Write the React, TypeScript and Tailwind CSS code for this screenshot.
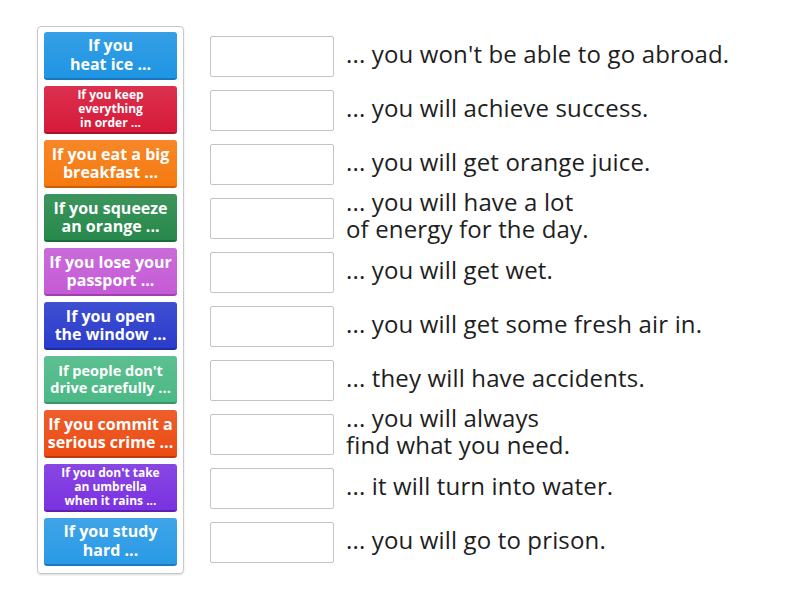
const items = [
  { text: ['If you', 'heat ice ...'], bg: 'bg-[#1f95e3]', border: 'border-[#1577bd]', size: 'text-[16px] leading-[19px]', answer: ["... you won't be able to go abroad."] },
  { text: ['If you keep', 'everything', 'in order ...'], bg: 'bg-[#d71a3a]', border: 'border-[#a9122c]', size: 'text-[12px] leading-[14px]', answer: ['... you will achieve success.'] },
  { text: ['If you eat a big', 'breakfast ...'], bg: 'bg-[#f67a10]', border: 'border-[#c85f06]', size: 'text-[16px] leading-[18px]', answer: ['... you will get orange juice.'] },
  { text: ['If you squeeze', 'an orange ...'], bg: 'bg-[#27894b]', border: 'border-[#1c6a39]', size: 'text-[16px] leading-[18px]', answer: ['... you will have a lot', 'of energy for the day.'] },
  { text: ['If you lose your', 'passport ...'], bg: 'bg-[#c55bd6]', border: 'border-[#a23fb3]', size: 'text-[16px] leading-[18px]', answer: ['... you will get wet.'] },
  { text: ['If you open', 'the window ...'], bg: 'bg-[#2a3ccc]', border: 'border-[#1d2b9e]', size: 'text-[16px] leading-[18px]', answer: ['... you will get some fresh air in.'] },
  { text: ["If people don't", 'drive carefully ...'], bg: 'bg-[#4bb985]', border: 'border-[#35946a]', size: 'text-[14.5px] leading-[17px]', answer: ['... they will have accidents.'] },
  { text: ['If you commit a', 'serious crime ...'], bg: 'bg-[#ec4c14]', border: 'border-[#bd3a0b]', size: 'text-[16px] leading-[18px]', answer: ['... you will always', 'find what you need.'] },
  { text: ["If you don't take", 'an umbrella', 'when it rains ...'], bg: 'bg-[#7b32e0]', border: 'border-[#5d20b5]', size: 'text-[12px] leading-[14px]', answer: ['... it will turn into water.'] },
  { text: ['If you study', 'hard ...'], bg: 'bg-[#2a9ae6]', border: 'border-[#1b7bc0]', size: 'text-[16px] leading-[19px]', answer: ['... you will go to prison.'] },
];

export default function App() {
  return (
    <div className="w-[800px] h-[600px] bg-white pl-[37px] pt-[26px] font-['Open_Sans',sans-serif] flex items-start">
      {/* Sources */}
      <div className="w-[147px] border border-[#c8c8c8] rounded-[4px] px-[6px] pt-[5px] pb-[7px] flex flex-col gap-[6px] shadow-[0_1px_2px_rgba(0,0,0,0.15)]">
        {items.map((item) => (
          <div
            key={item.text.join(' ')}
            className={`h-[48px] rounded-[3px] border-b-2 ${item.bg} ${item.border} flex flex-col items-center justify-center text-white font-bold text-center ${item.size} bg-gradient-to-b from-white/10 to-transparent`}
          >
            {item.text.map((line) => (
              <span key={line}>{line}</span>
            ))}
          </div>
        ))}
      </div>

      {/* Targets */}
      <div className="ml-[26px] pt-[6px] flex flex-col gap-[6px]">
        {items.map((item) => (
          <div key={item.answer.join(' ')} className="h-[48px] flex items-center">
            <div className="w-[124px] h-[41px] border border-[#c4c4c4] rounded-[2px] bg-white" />
            <div className="ml-[12px] mb-[6px] text-[24px] leading-[27px] tracking-[0.15px] text-[#1e1e1e]">
              {item.answer.map((line) => (
                <div key={line}>{line}</div>
              ))}
            </div>
          </div>
        ))}
      </div>
    </div>
  );
}
